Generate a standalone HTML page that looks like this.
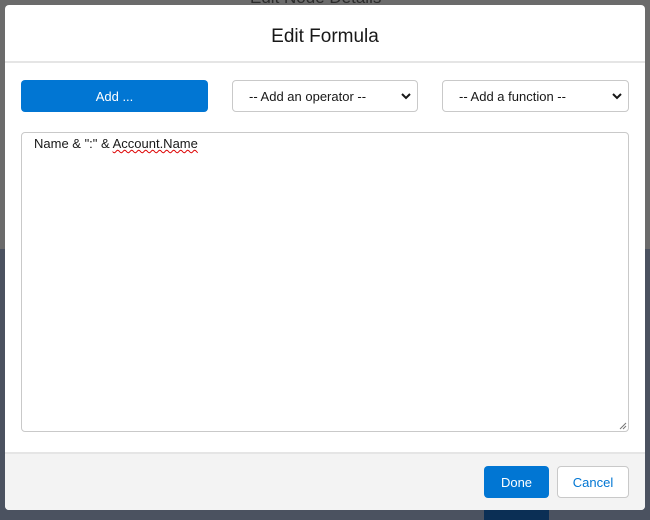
<!DOCTYPE html>
<html><head><style>
*{box-sizing:border-box;margin:0;padding:0}
body{width:650px;height:516px;overflow:hidden;font-family:"Liberation Sans",sans-serif;background:#4b5260;position:relative}
.top{position:absolute;left:0;top:0;width:650px;height:249px;background:#6b6b6b}
.bgbtn{position:absolute;left:484px;top:500px;width:65px;height:20px;background:#0b2f55}
.bgt{position:absolute;left:250px;top:-12px;font-size:17px;color:#2b2b2b}
.modal{position:absolute;left:5px;top:5px;width:640px;height:505px;background:#fff;border-radius:4px;overflow:hidden}
.hdr{height:58px;border-bottom:2px solid #e5e5e5;text-align:center;font-size:19px;color:#181818;line-height:64px}
.btn{position:absolute;left:16px;top:75px;width:187px;height:32px;background:#0176d3;border-radius:4px;color:#fff;font-size:13px;text-align:center;line-height:34px}
.sel{position:absolute;top:75px;height:32px;border:1px solid #c9c9c9;border-radius:4px;font-size:13px;color:#181818;line-height:32px;padding-left:16px}
.sel svg{position:absolute;right:6px;top:11px}
.ta{position:absolute;left:16px;top:127px;width:608px;height:300px;border:1px solid #c9c9c9;border-radius:4px;padding:3px 12px;font-size:13px;color:#181818}
.ta u{text-decoration:underline wavy #d00;text-decoration-thickness:1px}
.ftr{position:absolute;left:0;top:447px;width:640px;height:58px;background:#f3f3f3;border-top:2px solid #e5e5e5}
.done{position:absolute;left:479px;top:461px;width:65px;height:32px;background:#0176d3;border-radius:4px;color:#fff;font-size:13px;text-align:center;line-height:34px}
.cancel{position:absolute;left:552px;top:461px;width:72px;height:32px;background:#fff;border:1px solid #c9c9c9;border-radius:4px;color:#0176d3;font-size:13px;text-align:center;line-height:32px}
</style></head><body>
<div class="top"></div><div class="bgt">Edit Node Details</div><div class="bgbtn"></div>
<div class="modal">
<div class="hdr">Edit Formula</div>
<div class="btn">Add ...</div>
<div class="sel" style="left:227px;width:186px">-- Add an operator --<svg width="10" height="8" viewBox="0 0 10 8"><path d="M1 2l4 4 4-4" stroke="#181818" stroke-width="2" fill="none"/></svg></div>
<div class="sel" style="left:437px;width:187px">-- Add a function --<svg width="10" height="8" viewBox="0 0 10 8"><path d="M1 2l4 4 4-4" stroke="#181818" stroke-width="2" fill="none"/></svg></div>
<div class="ta">Name &amp; ":" &amp; <u>Account.Name</u>
<svg style="position:absolute;right:1px;bottom:1px" width="8" height="8" viewBox="0 0 8 8"><path d="M1 7L7 1M4 7L7 4" stroke="#777" stroke-width="1"/></svg></div>
<div class="ftr"></div>
<div class="done">Done</div>
<div class="cancel">Cancel</div>
</div>
</body></html>
